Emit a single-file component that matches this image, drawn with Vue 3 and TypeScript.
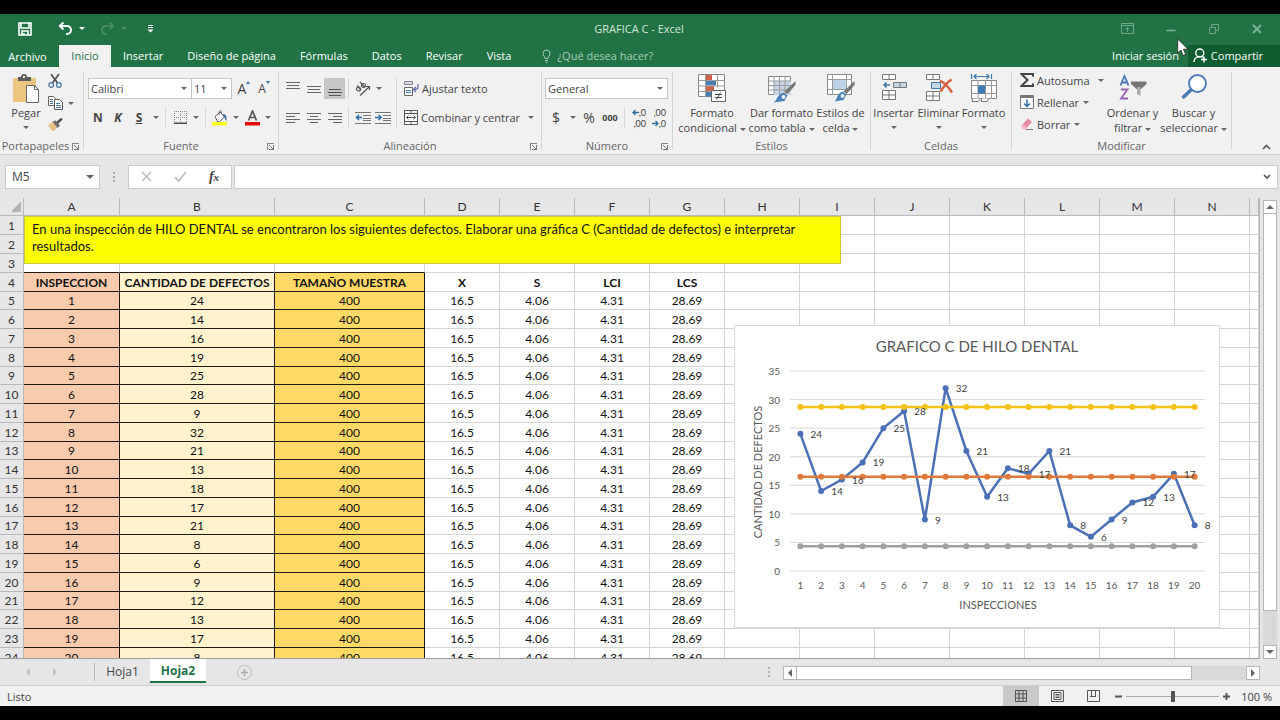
<script setup lang="ts">
import { ref } from 'vue'

const tabs = ['Insertar', 'Diseño de página', 'Fórmulas', 'Datos', 'Revisar', 'Vista']
const columns = ['A', 'B', 'C', 'D', 'E', 'F', 'G', 'H', 'I', 'J', 'K', 'L', 'M', 'N']
const defects = [24, 14, 16, 19, 25, 28, 9, 32, 21, 13, 18, 17, 21, 8, 6, 9, 12, 13, 17, 8]
const headings = ['INSPECCION', 'CANTIDAD DE DEFECTOS', 'TAMAÑO MUESTRA', 'X', 'S', 'LCI', 'LCS']

const blank = Array<string>(7).fill('')
const rows: string[][] = [
  blank,
  blank,
  blank,
  headings,
  ...defects.map((d, i) => [String(i + 1), String(d), '400', '16.5', '4.06', '4.31', '28.69']),
]

const cellBox = ref('M5')
const formula = ref('')
const zoom = ref(50)

const plot = { left: 56, right: 471, zero: 246, height: 200, max: 35 }
const px = (i: number) => plot.left + ((plot.right - plot.left) / defects.length) * (i + 0.5)
const py = (v: number) => plot.zero - (v * plot.height) / plot.max
const ticks = [0, 5, 10, 15, 20, 25, 30, 35]
const series = [
  { name: 'defectos', color: '#4a70b5', values: defects },
  { name: 'x', color: '#e07a3c', values: defects.map(() => 16.5) },
  { name: 'lci', color: '#a0a0a0', values: defects.map(() => 4.31) },
  { name: 'lcs', color: '#f5c114', values: defects.map(() => 28.69) },
]
const points = (values: number[]) => values.map((v, i) => `${px(i)},${py(v)}`).join(' ')
</script>

<template>
  <div class="screen">
    <header class="top">
      <div class="titlebar">
        <div class="quick">
          <button class="q save" aria-label="Guardar">
            <svg width="14" height="14" viewBox="0 0 14 14"><path d="M1 1h12v12H1zM3 1v5h8V1M4 13V9h6v4M6 11v2" fill="none" stroke="#fff" stroke-width="1.6" /></svg>
          </button>
          <button class="q undo" aria-label="Deshacer">
            <svg width="15" height="13" viewBox="0 0 15 13"><path d="M2 4h7a4 4 0 0 1 0 8H8M5.500.5L1.800 4l3.700 3.500" fill="none" stroke="#fff" stroke-width="2" /></svg>
          </button>
          <button class="q small" aria-label="Opciones de deshacer"><span class="caret light"></span></button>
          <button class="q redo" aria-label="Rehacer">
            <svg width="15" height="13" viewBox="0 0 15 13"><path d="M13 4H6a4 4 0 0 0 0 8h1M9.500.5L13.200 4 9.500 7.500" fill="none" stroke="#4b9069" stroke-width="1.700" /></svg>
          </button>
          <button class="q small" aria-label="Opciones de rehacer"><span class="caret dim"></span></button>
          <button class="q custom" aria-label="Personalizar barra">
            <svg width="7" height="8" viewBox="0 0 7 8"><path d="M1 .5h5M1 2.500h5" stroke="#fff" /><path d="M.500 4.500h6l-3 3z" fill="#fff" /></svg>
          </button>
        </div>
        <div class="title">GRAFICA C - Excel</div>
        <div class="window-buttons">
          <button aria-label="Opciones de la cinta"><svg width="13" height="11" viewBox="0 0 13 11"><path d="M.5.5h12v10H.5zM.500 2.500h12M6.500 9V4.500M4.500 6.500l2-2 2 2" fill="none" stroke="#6fa987" /></svg></button>
          <button aria-label="Minimizar"><svg width="10" height="10" viewBox="0 0 10 10"><path d="M.500 6.500h9" stroke="#7db293" stroke-width="1.500" /></svg></button>
          <button aria-label="Restaurar"><svg width="10" height="10" viewBox="0 0 10 10"><path d="M.5 3.500h6v6h-6zM2.500 3.500v-3h7v6h-3" fill="none" stroke="#6fa987" /></svg></button>
          <button aria-label="Cerrar"><svg width="10" height="10" viewBox="0 0 10 10"><path d="M1 1l8 8M9 1L1 9" stroke="#7db293" stroke-width="1.800" /></svg></button>
        </div>
      </div>
      <nav class="tabs">
        <button class="tab file">Archivo</button>
        <button class="tab current">Inicio</button>
        <button v-for="t in tabs" :key="t" class="tab">{{ t }}</button>
        <label class="ask">
          <svg width="9" height="14" viewBox="0 0 9 14"><path d="M3 9.500C3 7.500 1 7 1 4.500a3.500 3.500 0 0 1 7 0C8 7 6 7.500 6 9.500zM3 11.500h3M3.500 13.200h2" fill="none" stroke="#a6cbb5" /></svg>
          <input type="text" placeholder="¿Qué desea hacer?" aria-label="¿Qué desea hacer?" />
        </label>
        <a class="login" href="#">Iniciar sesión</a>
        <button class="share">
          <svg width="15" height="15" viewBox="0 0 15 15"><path d="M1 14c0-3 2-5 4.500-5M10 9C8.500 8 7 9 5.500 8.500M10.800 5a4 4 0 1 1-8 0 4 4 0 0 1 8 0zM8.500 8.500l1.500 1M11 8.500v6M8 11.500h6" fill="none" stroke="#fff" stroke-width="1.400" /></svg>
          Compartir
        </button>
      </nav>
      <svg class="pointer" width="12" height="19" viewBox="0 0 12 19"><path d="M.7 1v14l3.200-3 2.300 5.500 2.500-1-2.300-5.300H11z" fill="#fff" stroke="#222" stroke-width=".8" /></svg>
    </header>

    <section class="ribbon">
      <div class="group clip">
        <div class="body">
          <button class="big paste">
            <svg width="28" height="29" viewBox="0 0 28 29"><path d="M1 4h23v24H1z" fill="#ecc57e" /><path d="M6 3h3a3 3 0 0 1 6 0h4v4H6z" fill="#5c5c5c" /><circle cx="12" cy="3" r="1.200" fill="#f1f1f1" /><path d="M14.500 11.500h8l4 4v13h-12z" fill="#fff" stroke="#666" /><path d="M22.500 11.500v4h4" fill="none" stroke="#666" /></svg>
            <span>Pegar</span><span class="caret"></span>
          </button>
          <div class="clip-tools">
            <button aria-label="Cortar"><svg width="14" height="14" viewBox="0 0 14 14"><path d="M3 0l6.500 9M11 0L4.500 9" stroke="#555" stroke-width="1.800" /><circle cx="3.200" cy="11" r="2.300" fill="none" stroke="#4a7ba8" stroke-width="1.300" /><circle cx="10.800" cy="11" r="2.300" fill="none" stroke="#4a7ba8" stroke-width="1.300" /></svg></button>
            <button class="copy" aria-label="Copiar"><svg width="15" height="14" viewBox="0 0 15 14"><path d="M.5.5h5l2 2v7h-7z" fill="#fff" stroke="#666" /><path d="M2 3.500h3M2 5.500h3M2 7.500h3" stroke="#4a7ba8" /><path d="M6.500 3.500h5l3 3v7h-8z" fill="#fff" stroke="#555" /><path d="M8 7.500h4M8 9.500h5M8 11.500h5" stroke="#4a7ba8" /></svg><span class="caret"></span></button>
            <button aria-label="Copiar formato"><svg width="15" height="13" viewBox="0 0 15 13"><path d="M0 7l5-3 5 5-4 4H4z" fill="#ecc08a" /><path d="M4.500 3.500l3-1 4.500 5-2.500 2.500z" fill="#6d6d6d" /><path d="M9 5l5-4.500" stroke="#555" stroke-width="2.600" /></svg></button>
          </div>
        </div>
        <footer><span>Portapapeles</span><i class="launcher"></i></footer>
      </div>

      <div class="group font">
        <div class="body rows">
          <div class="line pickers">
            <span class="pick family"><select aria-label="Fuente"><option>Calibri</option></select><span class="caret"></span></span>
            <span class="pick size"><select aria-label="Tamaño de fuente"><option>11</option></select><span class="caret"></span></span>
            <button class="t grow" aria-label="Aumentar tamaño"><span class="glyph">A</span><i class="up"></i></button>
            <button class="t shrink" aria-label="Reducir tamaño"><span class="glyph">A</span><i class="down"></i></button>
          </div>
          <div class="line">
            <button class="t"><b>N</b></button>
            <button class="t"><b><em>K</em></b></button>
            <button class="t wide"><b><u>S</u></b></button>
            <span class="drop"><span class="caret"></span></span>
            <i class="sep"></i>
            <button class="t" aria-label="Bordes"><svg width="13" height="13" viewBox="0 0 13 13"><path d="M0 .5h13M0 6.500h13M.5 0v13M6.500 0v13M12.500 0v13" stroke="#888" stroke-dasharray="1 1" /><path d="M0 12.300h13" stroke="#444" stroke-width="1.500" /></svg></button>
            <span class="drop"><span class="caret"></span></span>
            <i class="sep"></i>
            <button class="t" aria-label="Color de relleno"><svg width="16" height="16" viewBox="0 0 16 16"><path d="M3 6.500L8 2l4.500 5-5 4.500h-2z" fill="#fff" stroke="#666" /><path d="M7 5V1.500a1.500 1.500 0 0 1 2.500 0V4" fill="none" stroke="#666" /><path d="M11 4c3 0 4 3 3.500 7C13 10 13 7 11 6z" fill="#3e6d9c" /><path d="M0 12h15v3.500H0z" fill="#ffff1e" /></svg></button>
            <span class="drop"><span class="caret"></span></span>
            <button class="t" aria-label="Color de fuente"><svg width="15" height="16" viewBox="0 0 15 16"><path d="M3.500 10.500L7.500 1l4 9.500M5 7.500h5" fill="none" stroke="#555" stroke-width="1.700" /><path d="M0 12h15v3.500H0z" fill="#e80c0c" /></svg></button>
            <span class="drop"><span class="caret"></span></span>
          </div>
        </div>
        <footer><span>Fuente</span><i class="launcher"></i></footer>
      </div>

      <div class="group align">
        <div class="body">
          <div class="rows">
            <div class="line">
              <button class="t a" aria-label="Alinear arriba"><svg width="14" height="14" viewBox="0 0 14 14"><path d="M0 .5h14M1 3.500h12M0 6.500h14" stroke="#666" /></svg></button>
              <button class="t a" aria-label="Alinear al medio"><svg width="14" height="14" viewBox="0 0 14 14"><path d="M0 4.500h14M1 7.500h12M0 10.500h14" stroke="#666" /></svg></button>
              <button class="t a on" aria-label="Alinear abajo"><svg width="14" height="14" viewBox="0 0 14 14"><path d="M1 7.500h12M0 10.500h14M1 13.500h12" stroke="#555" /></svg></button>
              <i class="sep"></i>
              <button class="t" aria-label="Orientación"><svg width="16" height="14" viewBox="0 0 16 14"><circle cx="3.500" cy="7" r="2" fill="none" stroke="#555" stroke-width="1.200" /><path d="M2 3.500l4 4.500M5 0l5 5.500" stroke="#555" stroke-width="1.200" /><circle cx="8.500" cy="3.500" r="2" fill="none" stroke="#555" stroke-width="1.200" /><path d="M5 13.500l9-8.500M11 4.500h3.500V8" fill="none" stroke="#555" stroke-width="1.200" /></svg></button>
              <span class="drop"><span class="caret"></span></span>
            </div>
            <div class="line">
              <button class="t a" aria-label="Alinear a la izquierda"><svg width="14" height="12" viewBox="0 0 14 12"><path d="M0 1.500h14M0 4.500h9M0 7.500h14M0 10.500h9" stroke="#666" /></svg></button>
              <button class="t a" aria-label="Centrar"><svg width="14" height="12" viewBox="0 0 14 12"><path d="M0 1.500h14M3 4.500h8M0 7.500h14M3 10.500h8" stroke="#666" /></svg></button>
              <button class="t a" aria-label="Alinear a la derecha"><svg width="14" height="12" viewBox="0 0 14 12"><path d="M0 1.500h14M5 4.500h9M0 7.500h14M5 10.500h9" stroke="#666" /></svg></button>
              <i class="sep"></i>
              <button class="t" aria-label="Disminuir sangría"><svg width="16" height="12" viewBox="0 0 16 12"><path d="M0 .500h16M8 3.500h8M8 6.500h8M8 8.500h8M0 11.500h16" stroke="#777" /><path d="M7 5.500H1.500M4 3L1.500 5.500 4 8" fill="none" stroke="#2f6ca5" stroke-width="1.500" /></svg></button>
              <button class="t" aria-label="Aumentar sangría"><svg width="16" height="12" viewBox="0 0 16 12"><path d="M0 .500h16M8 3.500h8M8 6.500h8M8 8.500h8M0 11.500h16" stroke="#777" /><path d="M0 5.500h6M3.500 3L6 5.500 3.500 8" fill="none" stroke="#2f6ca5" stroke-width="1.500" /></svg></button>
            </div>
          </div>
          <i class="sep tall"></i>
          <div class="rows texts">
            <button class="line label"><svg width="15" height="15" viewBox="0 0 15 15"><path d="M.5.5h8v3h-8z" fill="#ddd" stroke="#8a7f96" /><path d="M.5 6.500h8v8h-8z" fill="#fff" stroke="#666" /><path d="M2 9.500h5M2 11.500h5" stroke="#4a7ba8" /><path d="M14 3v3.500q0 2-4 2M12 6l-2.500 2.500L12 11" fill="none" stroke="#6b6fa8" stroke-width="1.300" /></svg>Ajustar texto</button>
            <button class="line label"><svg width="14" height="15" viewBox="0 0 14 15"><path d="M.5.5h13v14H.5zM.5 3.500h13M.5 11.500h13M7 .5v3M7 11.500v3" fill="#fff" stroke="#555" /><path d="M2.500 7.500h9M4.500 5.500l-2 2 2 2M9.500 5.500l2 2-2 2" fill="none" stroke="#555" /></svg>Combinar y centrar<span class="caret far"></span></button>
          </div>
        </div>
        <footer><span>Alineación</span><i class="launcher"></i></footer>
      </div>

      <div class="group number">
        <div class="body rows">
          <div class="line"><span class="pick format"><select aria-label="Formato de número"><option>General</option></select><span class="caret"></span></span></div>
          <div class="line">
            <button class="t wide money">$</button><span class="drop"><span class="caret"></span></span>
            <button class="t money">%</button><button class="t thousands">000</button>
            <i class="sep"></i>
            <button class="t decimals" aria-label="Aumentar decimales">
              <span><svg width="7" height="7" viewBox="0 0 7 7"><path d="M7 3.500H1.500M3.500 1L1 3.500 3.500 6" fill="none" stroke="#2f6ca5" stroke-width="1.300" /></svg>,0</span>
              <span>,00</span>
            </button>
            <button class="t decimals" aria-label="Disminuir decimales">
              <span>,00</span>
              <span><svg width="7" height="7" viewBox="0 0 7 7"><path d="M0 3.500h5.500M3.500 1L6 3.500 3.500 6" fill="none" stroke="#2f6ca5" stroke-width="1.300" /></svg>,0</span>
            </button>
          </div>
        </div>
        <footer><span>Número</span><i class="launcher"></i></footer>
      </div>

      <div class="group styles">
        <div class="body">
          <button class="big conditional">
            <svg width="28" height="29" viewBox="0 0 28 29"><path d="M.5.5h26v22H.5z" fill="#fff" stroke="#888" /><path d="M8 1h6v5H8zM8 12h8v5H8z" fill="#d0604a" /><path d="M8 6.500h10v5H8zM8 17.500h5v5H8z" fill="#4a7db5" /><path d="M.5 6.500h26M.5 12h26M.5 17.500h14M7.500.5v22M19.500.5v13" stroke="#999" fill="none" /><path d="M13.500 16.500h14v11h-14z" fill="#fff" stroke="#666" /><path d="M17 20.500h7M17 23.500h7M22.500 18.500l-4 7" stroke="#444" /></svg>
            <span>Formato</span><span>condicional <span class="caret"></span></span>
          </button>
          <button class="big table-format">
            <svg width="28" height="29" viewBox="0 0 28 29"><path d="M.5 2.500h22v18H.5z" fill="#fff" stroke="#888" /><path d="M6 7h17v14H6z" fill="#c7d6e6" /><path d="M.5 7h22M.5 11.500h22M.5 16h22M6 2.500v18M11.500 2.500v18M17 2.500v18" stroke="#999" /><path d="M27.500 7v4l-8 9-3-2.500z" fill="#777" /><path d="M15.500 18.500l4 3-3 5.500-11 1.500c4-2 3-8 10-10z" fill="#4a80b8" /><circle cx="15.500" cy="23" r="2" fill="#e8f0f8" /></svg>
            <span>Dar formato</span><span>como tabla <span class="caret"></span></span>
          </button>
          <button class="big cell-style">
            <svg width="28" height="29" viewBox="0 0 28 29"><path d="M.5.5h24v20H.5z" fill="#fff" stroke="#888" /><path d="M.5 5.500h24M.5 15.500h24M5.500.5v20M19.500.5v20" stroke="#999" /><path d="M6 6h13v9H6z" fill="#bed2e6" /><path d="M27.500 7v4l-8 9-3-2.500z" fill="#777" /><path d="M15.500 17.500l4 3-3 5.500-9 1.500c3-2 2-8 8-10z" fill="#4a80b8" /><circle cx="15.500" cy="22" r="2" fill="#e8f0f8" /></svg>
            <span>Estilos de</span><span>celda <span class="caret"></span></span>
          </button>
        </div>
        <footer><span>Estilos</span></footer>
      </div>

      <div class="group cells">
        <div class="body">
          <button class="big">
            <svg width="26" height="29" viewBox="0 0 26 29"><path d="M1.500.5h13v5h-13zM8 .5v5M1.500 16.500h13v9h-13zM8 16.500v9M1.500 21h13" fill="#fff" stroke="#777" /><path d="M12.500 8.500h13v5h-13z" fill="#c7d6e6" stroke="#777" /><path d="M19 8.500v5" stroke="#777" /><path d="M9 11H3M5.500 8.500L3 11l2.500 2.500" fill="none" stroke="#3c78b0" stroke-width="1.500" /></svg>
            <span>Insertar</span><span class="caret"></span>
          </button>
          <button class="big">
            <svg width="28" height="29" viewBox="0 0 28 29"><path d="M1.500.5h13v5h-13zM8 .5v5M1.500 17.500h13v9h-13zM8 17.500v9M1.500 22h13" fill="#fff" stroke="#777" /><path d="M6.500 8.500h9v6h-9z" fill="#c7d6e6" stroke="#4a7ba8" /><path d="M15 6.500q7 4 12 12M26.500 5.500q-6 4-11 12" fill="none" stroke="#d9603f" stroke-width="2.400" /></svg>
            <span>Eliminar</span><span class="caret"></span>
          </button>
          <button class="big">
            <svg width="28" height="29" viewBox="0 0 28 29"><path d="M1.500 0v5M21.500 0v5M4 2.500h15M6.500 0L4 2.500 6.500 5M16.500 0L19 2.500 16.500 5" fill="none" stroke="#3c78b0" stroke-width="1.200" /><path d="M1.500 6.500h25v18h-25z" fill="#fff" stroke="#888" /><path d="M1.500 11.500h25M1.500 19.500h25M8 6.500v18M15.500 6.500v18M21.500 6.500v18" stroke="#999" /><path d="M8 11.500h7v8H8z" fill="#3c78b0" /><path d="M3 24.500l-1 3h6l2-3M12 24.500l-1 3h6l2-3" fill="#fff" stroke="#777" /></svg>
            <span>Formato</span><span class="caret"></span>
          </button>
        </div>
        <footer><span>Celdas</span></footer>
      </div>

      <div class="group edit">
        <div class="body">
          <div class="edit-tools">
            <button class="label sum"><svg width="14" height="14" viewBox="0 0 14 14"><path d="M13 3.500V1H1.500l6 6-6 6H13v-2.500" fill="none" stroke="#444" stroke-width="2" /></svg>Autosuma<span class="caret far"></span></button>
            <button class="label"><svg width="14" height="14" viewBox="0 0 14 14"><path d="M.5.5h13v13H.5z" fill="#fff" stroke="#777" /><path d="M1 1h12v2H1z" fill="#777" /><path d="M7 4.500v7M4 8.500l3 3 3-3" fill="none" stroke="#2f6ca5" stroke-width="1.500" /></svg>Rellenar<span class="caret"></span></button>
            <button class="label"><svg width="14" height="14" viewBox="0 0 14 14"><path d="M1 9l7-7.500 4 3.500-6.500 7H3z" fill="#e889a0" /><path d="M1 9l2-2 4 4-1.500 1.500H3z" fill="#f3b8c6" /><path d="M6 12.500h7" stroke="#777" /></svg>Borrar<span class="caret"></span></button>
          </div>
          <button class="big sort">
            <svg width="28" height="29" viewBox="0 0 28 29"><path d="M1.500 11.500L5.500 2l4 9.500M3 8.500h5" fill="none" stroke="#4a78b5" stroke-width="1.800" /><path d="M2 15.500h6.500L2 24.500h7" fill="none" stroke="#9a62b5" stroke-width="1.800" /><path d="M12 7.500h15.500v2.500L22 15h-4.500L12 10z" fill="#777" /><path d="M18 13h3.500v9L18 20z" fill="#aaa" /></svg>
            <span>Ordenar y</span><span>filtrar <span class="caret"></span></span>
          </button>
          <button class="big search">
            <svg width="28" height="29" viewBox="0 0 28 29"><circle cx="17.500" cy="9.500" r="8.500" fill="#fff" stroke="#4a78b5" stroke-width="1.800" /><path d="M11.500 15.500L2.500 24" stroke="#4a78b5" stroke-width="3.500" /></svg>
            <span>Buscar y</span><span>seleccionar <span class="caret"></span></span>
          </button>
        </div>
        <footer><span>Modificar</span></footer>
      </div>
      <button class="collapse" aria-label="Contraer la cinta"><svg width="9" height="6" viewBox="0 0 9 6"><path d="M1 5l3.500-3.500L8 5" fill="none" stroke="#555" stroke-width="1.600" /></svg></button>
    </section>

    <section class="formula-bar">
      <div class="namebox"><input v-model="cellBox" type="text" aria-label="Cuadro de nombres" /><span class="caret big-caret"></span></div>
      <i class="dots"></i>
      <div class="fx">
        <button aria-label="Cancelar"><svg width="11" height="11" viewBox="0 0 11 11"><path d="M1 1l9 9M10 1l-9 9" stroke="#bbb" stroke-width="1.500" /></svg></button>
        <button aria-label="Introducir"><svg width="13" height="11" viewBox="0 0 13 11"><path d="M1 6l3.500 4L12 1" fill="none" stroke="#bbb" stroke-width="1.700" /></svg></button>
        <button class="fn"><em>f<small>x</small></em></button>
      </div>
      <div class="formula"><input v-model="formula" type="text" aria-label="Barra de fórmulas" /><svg width="8" height="6" viewBox="0 0 8 6"><path d="M1 1l3 3 3-3" fill="none" stroke="#555" stroke-width="1.600" /></svg></div>
    </section>

    <main class="work">
      <div class="sheet">
        <table>
          <colgroup>
            <col class="c-head" /><col class="c-a" /><col class="c-b" /><col class="c-c" />
            <col v-for="n in 11" :key="n" class="c-std" /><col />
          </colgroup>
          <thead>
            <tr><th class="corner"><i></i></th><th v-for="c in columns" :key="c">{{ c }}</th><th></th></tr>
          </thead>
          <tbody>
            <tr v-for="(r, i) in rows" :key="i" :class="{ heading: i === 3, data: i > 2, edge: i === 2 }">
              <th>{{ i + 1 }}</th>
              <td v-for="(v, j) in r" :key="j">{{ v }}</td>
              <td v-for="n in 8" :key="'e' + n"></td>
            </tr>
          </tbody>
        </table>
        <p class="note">En una inspección de HILO DENTAL se encontraron los siguientes defectos. Elaborar una gráfica C (Cantidad de defectos) e interpretar resultados.</p>
        <figure class="chart">
          <svg width="484" height="301" viewBox="1 1 484 301">
            <text class="chart-title" x="243" y="27">GRAFICO C DE HILO DENTAL</text>
            <g v-for="t in ticks" :key="t">
              <line :x1="plot.left" :x2="plot.right" :y1="py(t)" :y2="py(t)" stroke="#d9d9d9" />
              <text class="tick end" x="46" :y="py(t) + 4">{{ t }}</text>
            </g>
            <text v-for="(d, i) in defects" :key="i" class="tick mid" :x="px(i)" y="264">{{ i + 1 }}</text>
            <text class="axis" x="264" y="284">INSPECCIONES</text>
            <text class="axis" transform="translate(28 147) rotate(-90)">CANTIDAD DE DEFECTOS</text>
            <g v-for="s in series" :key="s.name">
              <polyline :points="points(s.values)" fill="none" :stroke="s.color" stroke-width="2.500" />
              <circle v-for="(v, i) in s.values" :key="i" :cx="px(i)" :cy="py(v)" r="3" :fill="s.color" />
            </g>
            <text v-for="(d, i) in defects" :key="'l' + i" class="point" :x="px(i) + 10" :y="py(d) + 4">{{ d }}</text>
          </svg>
        </figure>
      </div>
      <div class="vscroll">
        <button aria-label="Arriba"><i class="tri n"></i></button>
        <div class="track"><div class="thumb"></div></div>
        <button aria-label="Abajo"><i class="tri s"></i></button>
      </div>
    </main>

    <section class="sheetbar">
      <button class="nav" aria-label="Hoja anterior"><i class="tri w pale"></i></button>
      <button class="nav" aria-label="Hoja siguiente"><i class="tri e pale"></i></button>
      <i class="tab-sep"></i>
      <button class="sheet-tab">Hoja1</button>
      <button class="sheet-tab active">Hoja2</button>
      <button class="add" aria-label="Hoja nueva"><svg width="15" height="15" viewBox="0 0 15 15"><circle cx="7.500" cy="7.500" r="7" fill="none" stroke="#bbb" /><path d="M7.500 4v7M4 7.500h7" stroke="#aaa" stroke-width="1.500" /></svg></button>
      <i class="dots low"></i>
      <div class="hscroll">
        <button aria-label="Izquierda"><i class="tri w"></i></button>
        <div class="track"><div class="thumb"></div></div>
        <button aria-label="Derecha"><i class="tri e"></i></button>
      </div>
    </section>

    <footer class="status">
      <span class="ready">Listo</span>
      <button class="view on" aria-label="Normal"><svg width="12" height="12" viewBox="0 0 12 12"><path d="M.5.5h11v11H.5zM.5 4h11M.5 8h11M4 .5v11M8 .5v11" fill="none" stroke="#555" /></svg></button>
      <button class="view" aria-label="Diseño de página"><svg width="13" height="12" viewBox="0 0 13 12"><path d="M.5.5h12v11H.5zM3 2.500h7v7H3zM4.500 4.500h4M4.500 6h4M4.500 7.500h4" fill="none" stroke="#555" /></svg></button>
      <button class="view" aria-label="Vista previa de salto de página"><svg width="13" height="12" viewBox="0 0 13 12"><path d="M.5.5h12v11H.5zM4.500.5v6M8.500.5v6M3 6.500h6" fill="none" stroke="#555" /></svg></button>
      <button class="step" aria-label="Alejar"><svg width="7" height="7" viewBox="0 0 7 7"><path d="M0 3.500h7" stroke="#555" stroke-width="2" /></svg></button>
      <input v-model="zoom" class="zoom" type="range" min="0" max="100" aria-label="Zoom" />
      <button class="step" aria-label="Acercar"><svg width="7" height="7" viewBox="0 0 7 7"><path d="M0 3.500h7M3.500 0v7" stroke="#555" stroke-width="2" /></svg></button>
      <span class="percent">100 %</span>
    </footer>
  </div>
</template>

<style>
html,
body {
  margin: 0;
  background: #000;
}
</style>

<style scoped>
.screen {
  box-sizing: border-box;
  height: 100vh;
  padding: 14px 0;
  display: flex;
  flex-direction: column;
  overflow: hidden;
  background: #000;
  color: #444;
  font: 11px/15px 'Open Sans', 'Noto Sans', sans-serif;
}
.screen * {
  box-sizing: border-box;
}
button,
input,
select {
  margin: 0;
  padding: 0;
  border: 0;
  background: none;
  color: inherit;
  font: inherit;
  appearance: none;
  outline: none;
}
button {
  display: flex;
  align-items: center;
  justify-content: center;
  white-space: nowrap;
}
svg {
  display: block;
  flex: none;
}
.caret {
  display: inline-block;
  flex: none;
  border: 3px solid transparent;
  border-top-color: #666;
  border-bottom: 0;
  vertical-align: middle;
}
.caret.light {
  border-top-color: #fff;
}
.caret.dim {
  border-top-color: #4b9069;
}

/* title bar and tabs */
.top {
  position: relative;
  background: #217346;
  color: #fff;
}
.titlebar {
  display: grid;
  grid-template-columns: 1fr auto 1fr;
  align-items: center;
  height: 31px;
  padding: 0 2px 2px 0;
}
.quick {
  display: flex;
  align-items: center;
  padding-left: 14px;
}
.q {
  height: 20px;
  width: 22px;
}
.save {
  margin-right: 18px;
}
.q.small {
  width: 12px;
}
.redo {
  margin-left: 8px;
}
.custom {
  margin-left: 9px;
}
.title {
  color: #d5e6dc;
}
.window-buttons {
  display: flex;
  justify-content: flex-end;
}
.window-buttons button {
  width: 43px;
  height: 20px;
}
.tabs {
  display: flex;
  height: 22px;
}
.tab {
  padding: 0 12px 1px;
}
.tab.file {
  width: 59px;
  padding: 0 4px 0 0;
}
.tab.current {
  width: 52px;
  padding: 0 0 1px;
  background: #f1f1f1;
  color: #217346;
}
.ask {
  display: flex;
  align-items: center;
  gap: 6px;
  margin-left: 19px;
  padding-bottom: 1px;
  flex: 1;
}
.ask input {
  width: 110px;
}
.ask input::placeholder {
  color: #a6cbb5;
  opacity: 1;
}
.login {
  display: flex;
  align-items: center;
  margin-right: 9px;
  padding-bottom: 1px;
  color: #fff;
  text-decoration: none;
}
.share {
  gap: 3px;
  width: 92px;
  padding: 0 12px 1px 0;
  background: #0f5c31;
}
.pointer {
  position: absolute;
  right: 91px;
  top: 24px;
}

/* ribbon */
.ribbon {
  display: flex;
  height: 88px;
  padding-top: 5px;
  border-bottom: 1px solid #d2d2d2;
  background: #f1f1f1;
}
.group {
  flex: none;
  display: flex;
  flex-direction: column;
  height: 78px;
  border-right: 1px solid #d4d4d4;
}
.body {
  flex: none;
  display: flex;
  height: 66px;
}
.group footer {
  position: relative;
  display: flex;
  justify-content: center;
  height: 12px;
  color: #666;
  line-height: 16px;
}
.launcher {
  position: absolute;
  right: 4px;
  top: 5px;
  width: 7px;
  height: 7px;
  border-top: 1px solid #888;
  border-left: 1px solid #888;
}
.launcher::after {
  content: '';
  position: absolute;
  right: 0;
  bottom: 0;
  width: 4px;
  height: 4px;
  border-right: 1px solid #777;
  border-bottom: 1px solid #777;
  background: linear-gradient(45deg, transparent 40%, #777 40%, #777 60%, transparent 60%);
}
.clip {
  width: 84px;
}
.clip footer {
  padding-right: 12px;
}
.font {
  width: 195px;
}
.align {
  width: 263px;
}
.number {
  width: 131px;
}
.styles {
  width: 198px;
}
.cells {
  width: 141px;
}
.edit {
  width: 220px;
}
.big {
  flex-direction: column;
  justify-content: flex-start;
  padding-top: 2px;
}
.big > svg {
  margin-bottom: 2px;
}
.big > .caret {
  margin-top: 6px;
}
.paste {
  width: 46px;
  padding-left: 6px;
}
.clip-tools {
  display: flex;
  flex-direction: column;
  gap: 8px;
  padding: 2px 0 0 2px;
}
.clip-tools button {
  justify-content: flex-start;
  gap: 5px;
}
.rows {
  display: flex;
  flex-direction: column;
  gap: 8px;
  padding-top: 6px;
}
.font .body {
  padding-left: 4px;
}
.number .body {
  padding-left: 3px;
}
.align .rows {
  padding-left: 3px;
}
.line {
  display: flex;
  align-items: center;
  height: 21px;
}
.t {
  width: 20px;
  height: 21px;
}
.t.wide {
  width: 22px;
}
.t.a {
  width: 21px;
}
.t.on {
  background: #c6c6c6;
}
.drop {
  display: flex;
  justify-content: center;
  width: 12px;
}
.sep {
  flex: none;
  width: 1px;
  height: 21px;
  margin: 0 4px 0 3px;
  background: #d8d8d8;
}
.sep.tall {
  height: 50px;
  margin: 6px 0 0 3px;
}
.pick {
  display: flex;
  align-items: center;
  height: 21px;
  padding-right: 4px;
  border: 1px solid #c6c6c6;
  background: #fff;
}
.pick select {
  flex: 1;
  min-width: 0;
  padding-left: 2px;
}
.family {
  width: 104px;
}
.size {
  width: 40px;
  border-left: 0;
}
.grow {
  margin-left: 2px;
  font-size: 14px;
}
.shrink {
  font-size: 12px;
}
.up,
.down {
  align-self: flex-start;
  margin-top: 3px;
  border: 2px solid transparent;
}
.up {
  border-bottom: 3px solid #3c78b0;
  border-top: 0;
}
.down {
  border-top: 3px solid #3c78b0;
  border-bottom: 0;
}
.format {
  width: 123px;
}
.font b {
  font-size: 12px;
}
.label {
  gap: 3px;
  justify-content: flex-start;
}
.align .texts {
  padding-left: 7px;
}
.label .caret {
  margin-left: 1px;
}
.label .caret.far {
  margin-left: 5px;
}
.money {
  font-size: 14px;
}
.t.thousands {
  width: 22px;
  font: 700 9px/12px 'Open Sans', sans-serif;
}
.t.decimals {
  flex-direction: column;
  align-items: flex-end;
  height: 22px;
  padding-right: 3px;
  font: 9px/11px Lato, sans-serif;
}
.decimals span {
  display: flex;
  align-items: center;
}
.conditional {
  width: 78px;
}
.table-format {
  width: 61px;
}
.cell-style {
  width: 57px;
}
.cells .big {
  width: 45px;
}
.edit-tools {
  display: flex;
  flex-direction: column;
  gap: 8px;
  width: 90px;
  padding: 1px 0 0 8px;
}
.edit-tools .label {
  height: 14px;
}
.sort,
.search {
  width: 61px;
}
.collapse {
  align-self: flex-end;
  margin: 0 9px 4px auto;
}

/* formula bar */
.formula-bar {
  display: flex;
  align-items: center;
  height: 43px;
  padding: 0 2px 0 5px;
  background: #e6e6e6;
}
.namebox,
.fx,
.formula {
  display: flex;
  align-items: center;
  height: 24px;
  border: 1px solid #cdcdcd;
  background: #fff;
}
.namebox {
  width: 95px;
  padding: 0 5px 0 6px;
}
.namebox input {
  flex: 1;
  min-width: 0;
  font-size: 12px;
}
.big-caret {
  border-width: 4px 4px 0;
}
.dots {
  width: 2px;
  height: 10px;
  margin: 0 13px;
  background: repeating-linear-gradient(#aaa 0 2px, transparent 2px 4px);
}
.fx {
  width: 104px;
  margin-right: 2px;
}
.fx button {
  flex: 1;
  height: 22px;
}
.fn {
  font: 700 14px/20px 'Liberation Serif', serif;
}
.fn small {
  font-size: 11px;
}
.formula {
  flex: 1;
  padding-right: 6px;
}
.formula input {
  flex: 1;
}

/* worksheet */
.work {
  flex: 1;
  min-height: 0;
  display: flex;
  background: #e6e6e6;
}
.sheet {
  position: relative;
  flex: 1;
  min-width: 0;
  overflow: hidden;
  border-right: 1px solid #b5b5b5;
  border-bottom: 1px solid #9c9c9c;
  background: #fff;
  color: #111;
  font: 12px/15px Lato, sans-serif;
}
table {
  width: 100%;
  table-layout: fixed;
  border-spacing: 0;
}
.c-head {
  width: 24px;
}
.c-a {
  width: 96px;
}
.c-b {
  width: 155px;
}
.c-c {
  width: 150px;
}
.c-std {
  width: 75px;
}
th,
td {
  padding: 0;
  border-right: 1px solid #d4d4d4;
  border-bottom: 1px solid #d4d4d4;
  text-align: center;
  white-space: nowrap;
}
th {
  border-color: #b9b9b9;
  background: #e6e6e6;
  color: #333;
  font-weight: 400;
}
thead tr {
  height: 18px;
}
.corner i {
  display: block;
  width: 11px;
  height: 11px;
  margin: 0 0 0 auto;
  border-right: 2px solid #e6e6e6;
  background: linear-gradient(135deg, transparent 50%, #b4b4b4 50%);
}
tbody tr {
  height: 19px;
}
tbody tr:nth-child(4n + 5) {
  height: 18px;
}
.heading td {
  font-weight: 700;
}
.edge td:nth-child(-n + 4),
.data td:nth-child(-n + 4) {
  border-bottom-color: #1c1a12;
}
.data td:nth-child(2),
.data td:nth-child(3),
.data td:nth-child(4) {
  border-right-color: #1c1a12;
}
.data td:nth-child(2) {
  background: #f8cbad;
}
.data td:nth-child(3) {
  background: #fff2cc;
}
.data td:nth-child(4) {
  background: #ffd966;
}
.note {
  position: absolute;
  left: 24px;
  top: 18px;
  width: 817px;
  height: 48px;
  margin: 0;
  padding: 4px 7px;
  border: 1px solid #c9c93a;
  background: #ff0;
  font-size: 13px;
  line-height: 17px;
}
.chart {
  position: absolute;
  left: 734px;
  top: 127px;
  margin: 0;
  border: 1px solid #d9d9d9;
  background: #fff;
}
.chart text {
  fill: #595959;
  font-size: 10px;
}
.chart .chart-title {
  font-size: 15px;
  text-anchor: middle;
}
.chart .end {
  text-anchor: end;
}
.chart .mid {
  text-anchor: middle;
}
.chart .axis {
  font-size: 11px;
  text-anchor: middle;
}
.chart .point {
  fill: #404040;
}

/* scroll bars */
.tri {
  border: 4px solid transparent;
}
.tri.n {
  border-top: 0;
  border-bottom-color: #666;
}
.tri.s {
  border-bottom: 0;
  border-top-color: #666;
}
.tri.w {
  border-left: 0;
  border-right-color: #666;
}
.tri.e {
  border-right: 0;
  border-left-color: #666;
}
.tri.w.pale {
  border-right-color: #c2c2c2;
}
.tri.e.pale {
  border-left-color: #c2c2c2;
}
.vscroll {
  display: flex;
  flex-direction: column;
  width: 14px;
  margin: 2px 3px 0 3px;
}
.vscroll button,
.hscroll button {
  flex: none;
  width: 14px;
  height: 14px;
  border: 1px solid #b5b5b5;
  background: #fff;
}
.track {
  flex: 1;
  display: flex;
  background: #d9d9d9;
}
.thumb {
  border: 1px solid #b5b5b5;
  background: #fff;
}
.vscroll .thumb {
  width: 100%;
  height: 92%;
  border-top: 0;
}
.hscroll .thumb {
  width: 88%;
  border-left: 0;
}

/* sheet tabs */
.sheetbar {
  display: flex;
  height: 27px;
  padding: 0 20px 0 14px;
  border-bottom: 1px solid #cfcfcf;
  background: #e6e6e6;
}
.nav {
  width: 27px;
  height: 25px;
}
.tab-sep {
  width: 1px;
  height: 18px;
  margin: 4px 0 0 26px;
  background: #b5b5b5;
}
.sheet-tab {
  width: 55px;
  height: 24px;
  font-size: 12px;
}
.sheet-tab.active {
  width: 56px;
  border-bottom: 2px solid #217346;
  background: #fff;
  color: #217346;
  font-weight: 700;
}
.add {
  width: 76px;
  height: 26px;
}
.dots.low {
  margin: 8px 13px 0 auto;
}
.hscroll {
  display: flex;
  width: 477px;
  height: 14px;
  margin-top: 7px;
}

/* status bar */
.status {
  display: flex;
  align-items: center;
  height: 20px;
  padding-right: 8px;
  background: #f1f1f1;
}
.ready {
  flex: 1;
  padding-left: 7px;
}
.view {
  width: 36px;
  height: 20px;
}
.view.on {
  background: #c8c8c8;
}
.step {
  width: 15px;
  height: 20px;
}
.zoom {
  width: 93px;
  height: 12px;
  background: linear-gradient(#aaa, #aaa) center / 100% 1px no-repeat;
}
.zoom::-webkit-slider-thumb {
  appearance: none;
  width: 4px;
  height: 11px;
  background: #555;
}
.percent {
  width: 38px;
  text-align: right;
}
</style>
